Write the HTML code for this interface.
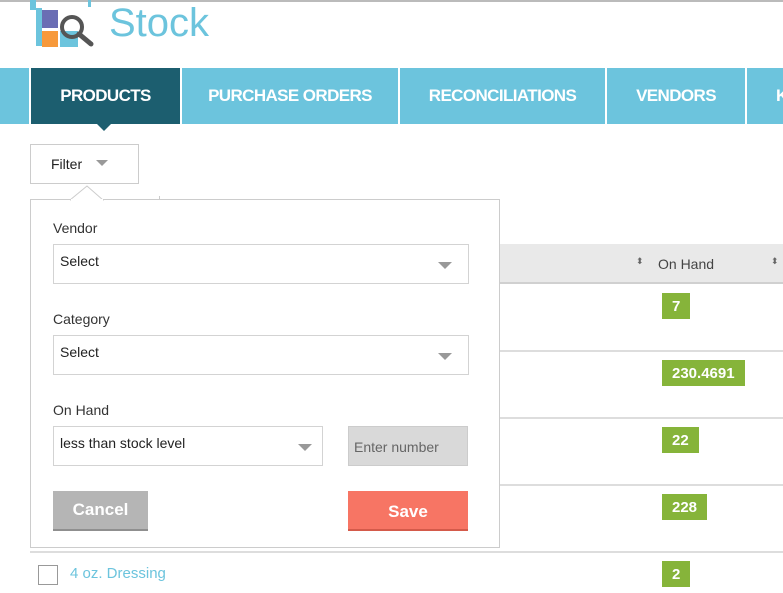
<!DOCTYPE html>
<html><head><style>
*{margin:0;padding:0;box-sizing:border-box}
body{width:783px;height:593px;overflow:hidden;background:#fff;font-family:"Liberation Sans",sans-serif;position:relative}
.a{position:absolute}
.nav{left:0;top:68px;width:783px;height:56px;background:#6cc4dd}
.tab{position:absolute;top:0;height:56px;color:#fff;font-weight:bold;font-size:17px;letter-spacing:-0.6px;line-height:56px;text-align:center;border-left:2px solid #fff}
.lbl{font-size:14px;color:#333}
.sel{border:1px solid #d3d3d3;background:#fff;font-size:14px;color:#222;padding:8px 6px}
.tri{position:absolute;width:0;height:0;border-left:7px solid transparent;border-right:7px solid transparent;border-top:7px solid #999}
.badge{background:#86b43a;color:#fff;font-weight:bold;font-size:15px;height:26px;line-height:27px;padding:0 10px}
.line{left:30px;width:753px;height:2px;background:#ddd}
</style></head><body>
<div class="a" style="left:0;top:0;width:783px;height:2px;background:#bbb"></div>
<!-- logo -->
<div class="a" style="left:30px;top:0;width:6px;height:10px;background:#6cc4dd"></div>
<div class="a" style="left:36px;top:8px;width:6px;height:38px;background:#6cc4dd"></div>
<div class="a" style="left:42px;top:10px;width:16px;height:18px;background:#6a6db4"></div>
<div class="a" style="left:42px;top:31px;width:16px;height:16px;background:#f7993b"></div>
<div class="a" style="left:60px;top:31px;width:18px;height:16px;background:#6cc4dd"></div>
<div class="a" style="left:88px;top:0;width:3px;height:7px;background:#6cc4dd"></div>
<svg class="a" style="left:58px;top:12px" width="40" height="36"><circle cx="14" cy="15" r="10" fill="none" stroke="#555" stroke-width="4"/><line x1="21" y1="22" x2="33" y2="32" stroke="#555" stroke-width="5" stroke-linecap="round"/></svg>
<div class="a" style="left:109px;top:0;font-size:40px;color:#6cc4dd;line-height:46px">Stock</div>
<!-- nav -->
<div class="a nav">
<div class="tab" style="left:29px;width:151px;background:#1c5e6f">PRODUCTS</div>
<div class="tab" style="left:180px;width:218px">PURCHASE ORDERS</div>
<div class="tab" style="left:398px;width:207px">RECONCILIATIONS</div>
<div class="tab" style="left:605px;width:140px">VENDORS</div>
<div class="tab" style="left:745px;width:60px;text-align:left;padding-left:29px">K</div>
</div>
<div class="a" style="left:97px;top:124px;border-left:7px solid transparent;border-right:7px solid transparent;border-top:7px solid #1c5e6f"></div>
<!-- filter button -->
<div class="a" style="left:30px;top:144px;width:109px;height:40px;border:1px solid #ccc;font-size:14px;color:#222;padding:11px 0 0 20px">Filter</div>
<div class="tri" style="left:96px;top:160px;border-left-width:6px;border-right-width:6px;border-top-width:6px"></div>
<div class="a" style="left:159px;top:196px;width:1px;height:8px;background:#ccc"></div>
<!-- table -->
<div class="a" style="left:500px;top:244px;width:283px;height:40px;background:#e9e9e9;border-bottom:2px solid #d0d0d0"></div>
<div class="a" style="left:636px;top:256px;font-size:9px;color:#666">⬍</div>
<div class="a" style="left:658px;top:256px;font-size:14px;color:#444">On Hand</div>
<div class="a" style="left:771px;top:256px;font-size:9px;color:#666">⬍</div>
<div class="a line" style="top:350px"></div>
<div class="a line" style="top:417px"></div>
<div class="a line" style="top:484px"></div>
<div class="a line" style="top:551px"></div>
<div class="a badge" style="left:662px;top:293px">7</div>
<div class="a badge" style="left:662px;top:360px">230.4691</div>
<div class="a badge" style="left:662px;top:427px">22</div>
<div class="a badge" style="left:662px;top:494px">228</div>
<div class="a badge" style="left:662px;top:561px">2</div>
<div class="a" style="left:38px;top:565px;width:20px;height:20px;border:1px solid #999"></div>
<div class="a" style="left:70px;top:565px;font-size:15px;color:#6cc4dd">4 oz. Dressing</div>
<!-- popup -->
<div class="a" style="left:30px;top:199px;width:470px;height:349px;border:1px solid #ccc;background:#fff"></div>
<svg class="a" style="left:70px;top:185px" width="34" height="16"><polygon points="0,15 17,1 33,15" fill="#fff" stroke="#ccc"/><rect x="1" y="14" width="32" height="3" fill="#fff"/></svg>
<div class="a lbl" style="left:53px;top:220px">Vendor</div>
<div class="a sel" style="left:53px;top:244px;width:416px;height:40px">Select</div>
<div class="tri" style="left:438px;top:262px"></div>
<div class="a lbl" style="left:53px;top:311px">Category</div>
<div class="a sel" style="left:53px;top:335px;width:416px;height:40px">Select</div>
<div class="tri" style="left:438px;top:353px"></div>
<div class="a lbl" style="left:53px;top:402px">On Hand</div>
<div class="a sel" style="left:53px;top:426px;width:270px;height:40px">less than stock level</div>
<div class="tri" style="left:298px;top:444px"></div>
<div class="a" style="left:348px;top:426px;width:120px;height:40px;background:#d9d9d9;border:1px solid #ccc;font-size:14px;color:#666;padding:12px 5px">Enter number</div>
<div class="a" style="left:53px;top:491px;width:95px;height:40px;background:#b5b5b5;border-bottom:2px solid #8f8f8f;color:#fff;font-size:17px;font-weight:bold;text-align:center;line-height:38px">Cancel</div>
<div class="a" style="left:348px;top:491px;width:120px;height:40px;background:#f77564;border-bottom:2px solid #d45a4a;color:#fff;font-size:17px;font-weight:bold;text-align:center;line-height:42px">Save</div>
</body></html>
